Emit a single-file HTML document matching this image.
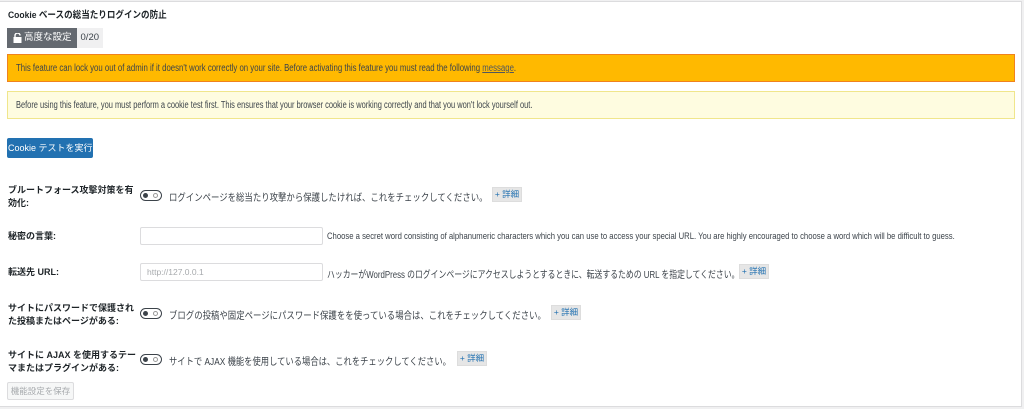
<!DOCTYPE html>
<html><head><meta charset="utf-8"><style>
*{box-sizing:border-box}
body{margin:0;background:#f0f0f1;width:1024px;height:409px;overflow:hidden;font-family:"Liberation Sans","Noto Sans CJK JP",sans-serif;font-size:10px;color:#3c434a}
.panel{position:absolute;left:0;top:1px;width:1022px;height:406px;background:#fff;border:1px solid #dcdcde;border-left:none}
.a{position:absolute;white-space:nowrap;transform-origin:0 50%}
h2{position:absolute;left:8px;top:7px;margin:0;font-size:9.5px;font-weight:bold;color:#1d2327;white-space:nowrap;transform:scaleX(.9);transform-origin:0 50%}
.badge{position:absolute;left:7px;top:28px;height:20px;display:flex;font-size:9.5px}
.badge .l{background:#646970;color:#fff;padding:0 5px 0 6px;line-height:20px;display:flex;align-items:center;gap:2px}
.badge .r{background:#f0f0f1;padding:0 4px;line-height:20px}
.warn{position:absolute;left:7px;top:54px;width:1008px;height:28px;background:#ffb900;border:1px solid #f0821e}
.info{position:absolute;left:7px;top:91px;width:1008px;height:28px;background:#fefce0;border:1px solid #f0e68c}
.btn{position:absolute;left:7px;top:138px;width:86px;height:20px;background:#2271b1;border:1px solid #2271b1;border-radius:2px;color:#fff;text-align:center;line-height:18px;font-size:9px;white-space:nowrap}
.lbl{position:absolute;left:8px;font-weight:bold;color:#1d2327;line-height:13px;width:130px;font-size:9px}
.tog{position:absolute;left:140px;width:22px;height:11px;border:1px solid #3c434a;border-radius:6px}
.tog:before{content:"";position:absolute;left:2px;top:2px;width:5px;height:5px;border-radius:50%;background:#3c434a}
.tog:after{content:"";position:absolute;right:3px;top:2px;width:3px;height:3px;border:1px solid #999;border-radius:50%}
.det{position:absolute;background:#e6e6e6;border:1px solid #ddd;width:30px;height:15px;line-height:13px;text-align:center;color:#2271b1;font-size:8.5px;white-space:nowrap}
.inp{position:absolute;left:140px;width:183px;height:18px;border:1px solid #dcdcde;border-radius:2px;padding-left:6px;line-height:16px;color:#a7aaad;font-size:8.5px}
.save{position:absolute;left:7px;top:382px;width:67px;height:18px;background:#f6f7f7;border:1px solid #dcdcde;border-radius:2px;color:#a7aaad;text-align:center;line-height:16px;font-size:8.5px;white-space:nowrap}
</style></head><body>
<div class="panel"></div>
<h2>Cookie ベースの総当たりログインの防止</h2>
<div class="badge"><div class="l"><svg width="9" height="10" viewBox="0 0 9 10"><path d="M2 4V2.5a2.5 2.5 0 0 1 5 0" fill="none" stroke="#fff" stroke-width="1.4"/><rect x="0.5" y="4" width="8" height="6" fill="#fff"/></svg>高度な設定</div><div class="r">0/20</div></div>
<div class="warn"></div>
<div class="a" style="left:16px;top:63px;transform:scaleX(.78)">This feature can lock you out of admin if it doesn't work correctly on your site. Before activating this feature you must read the following <u style="color:#50575e">message</u>.</div>
<div class="info"></div>
<div class="a" style="left:16px;top:100px;transform:scaleX(.745)">Before using this feature, you must perform a cookie test first. This ensures that your browser cookie is working correctly and that you won't lock yourself out.</div>
<div class="btn">Cookie テストを実行</div>

<div class="lbl" style="top:184px">ブルートフォース攻撃対策を有効化:</div>
<div class="tog" style="top:190px"></div>
<div class="a" style="left:169px;top:189px;transform:scaleX(.84)">ログインページを総当たり攻撃から保護したければ、これをチェックしてください。</div>
<div class="det" style="left:492px;top:187px">+ 詳細</div>

<div class="lbl" style="top:230px">秘密の言葉:</div>
<div class="inp" style="top:227px"></div>
<div class="a" style="left:327px;top:231px;transform:scaleX(.81);font-size:9.5px">Choose a secret word consisting of alphanumeric characters which you can use to access your special URL. You are highly encouraged to choose a word which will be difficult to guess.</div>

<div class="lbl" style="top:266px">転送先 URL:</div>
<div class="inp" style="top:263px">http://127.0.0.1</div>
<div class="a" style="left:327px;top:266px;transform:scaleX(.785)">ハッカーがWordPress のログインページにアクセスしようとするときに、転送するための URL を指定してください。</div>
<div class="det" style="left:739px;top:264px">+ 詳細</div>

<div class="lbl" style="top:302px">サイトにパスワードで保護された投稿またはページがある:</div>
<div class="tog" style="top:308px"></div>
<div class="a" style="left:169px;top:307px;transform:scaleX(.84)">ブログの投稿や固定ページにパスワード保護をを使っている場合は、これをチェックしてください。</div>
<div class="det" style="left:551px;top:305px">+ 詳細</div>

<div class="lbl" style="top:349px">サイトに AJAX を使用するテーマまたはプラグインがある:</div>
<div class="tog" style="top:354px"></div>
<div class="a" style="left:169px;top:353px;transform:scaleX(.83)">サイトで AJAX 機能を使用している場合は、これをチェックしてください。</div>
<div class="det" style="left:457px;top:351px">+ 詳細</div>

<div class="save">機能設定を保存</div>
</body></html>
